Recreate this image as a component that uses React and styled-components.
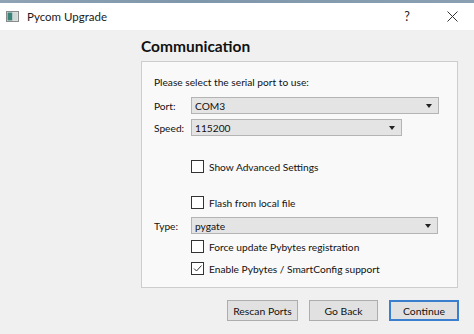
import React from "react";
import styled, { createGlobalStyle } from "styled-components";

const Global = createGlobalStyle`
  html, body { margin: 0; padding: 0; }
  body { font-family: "Lato", "Noto Sans", sans-serif; color: #111; }
`;

const Window = styled.div`
  width: 474px;
  height: 334px;
  display: flex;
  flex-direction: column;
  overflow: hidden;
  background: #f0f0f0;
`;

const DesktopStrip = styled.div`
  height: 3px;
  background: linear-gradient(90deg, #8ea3b4, #7f97ab 40%, #8aa0b2);
`;

const TitleBar = styled.div`
  height: 27px;
  background: #fff;
  display: flex;
  align-items: center;
  padding-left: 6px;
  font-size: 11.5px;
`;

const TitleText = styled.span`
  margin-left: 8px;
  color: #1a1a1a;
  flex: 1;
`;

const TitleBtn = styled.div`
  width: ${(p) => p.$w}px;
  display: flex;
  justify-content: center;
  align-items: center;
  font-size: 12.5px;
  color: #222;
`;

const Body = styled.div`
  flex: 1;
  display: flex;
  flex-direction: column;
  padding: 5px 16px 0 141px;
`;

const Heading = styled.div`
  font-size: 15.5px;
  font-weight: 700;
  height: 22px;
  line-height: 22px;
`;

const GroupBox = styled.div`
  margin-top: 4px;
  height: 225px;
  border: 1px solid #cdcdcd;
  background: #f9f9f9;
  padding-left: 12px;
  display: flex;
  flex-direction: column;
  font-size: 10.2px;
`;

const Row = styled.div`
  display: flex;
  align-items: center;
  height: 17px;
  margin-top: ${(p) => p.$mt}px;
  padding-left: ${(p) => (p.$indent ? 37 : 0)}px;
`;

const Label = styled.span`
  width: 37px;
`;

const Combo = styled.div`
  width: ${(p) => p.$w}px;
  height: 17px;
  box-sizing: border-box;
  border: 1px solid #b4b4b4;
  background: #e4e4e4;
  display: flex;
  align-items: center;
  padding-left: 3px;
`;

const ComboText = styled.span`
  flex: 1;
`;

const Arrow = styled.span`
  width: 0;
  height: 0;
  border-left: 3.5px solid transparent;
  border-right: 3.5px solid transparent;
  border-top: 4px solid #222;
  margin-right: 6px;
`;

const Box = styled.span`
  width: 13px;
  height: 13px;
  box-sizing: border-box;
  border: 1px solid #333;
  background: #fff;
  margin-right: 5px;
  display: flex;
  align-items: center;
  justify-content: center;
`;

const Buttons = styled.div`
  display: flex;
  justify-content: flex-end;
  gap: 11px;
  margin-top: 12px;
  margin-right: -1px;
`;

const Button = styled.div`
  width: ${(p) => p.$w}px;
  height: 21px;
  box-sizing: border-box;
  border: 1px solid ${(p) => (p.$primary ? "#3a7fcf" : "#adadad")};
  box-shadow: ${(p) => (p.$primary ? "inset 0 0 0 1px #3a7fcf" : "none")};
  background: #e1e1e1;
  display: flex;
  align-items: center;
  justify-content: center;
  font-size: 10.4px;
`;

const Check = ({ checked }) => (
  <Box>
    {checked && (
      <svg width="11" height="11" viewBox="0 0 11 11">
        <path d="M2 5.5 L4.5 8 L9.5 2.5" fill="none" stroke="#333" strokeWidth="1" />
      </svg>
    )}
  </Box>
);

const AppIcon = () => (
  <svg width="13" height="11" viewBox="0 0 13 11">
    <rect x="0.5" y="0.5" width="12" height="10" fill="#e8e8e8" stroke="#8a8a8a" />
    <rect x="1.5" y="1.5" width="5" height="8" fill="#3b8378" />
    <rect x="6.5" y="1.5" width="5" height="8" fill="#cfd8d6" />
  </svg>
);

export default function App() {
  return (
    <Window>
      <Global />
      <DesktopStrip />
      <TitleBar>
        <AppIcon />
        <TitleText>Pycom Upgrade</TitleText>
        <TitleBtn $w={46}>?</TitleBtn>
        <TitleBtn $w={44}>
          <svg width="11" height="11" viewBox="0 0 11 11">
            <path d="M0.5 0.5 L10.5 10.5 M10.5 0.5 L0.5 10.5" stroke="#333" strokeWidth="1" />
          </svg>
        </TitleBtn>
      </TitleBar>
      <Body>
        <Heading>Communication</Heading>
        <GroupBox>
          <Row $mt={11}>Please select the serial port to use:</Row>
          <Row $mt={7}>
            <Label>Port:</Label>
            <Combo $w={248}>
              <ComboText>COM3</ComboText>
              <Arrow />
            </Combo>
          </Row>
          <Row $mt={5}>
            <Label>Speed:</Label>
            <Combo $w={211}>
              <ComboText>115200</ComboText>
              <Arrow />
            </Combo>
          </Row>
          <Row $mt={22} $indent>
            <Check />
            Show Advanced Settings
          </Row>
          <Row $mt={19} $indent>
            <Check />
            Flash from local file
          </Row>
          <Row $mt={6}>
            <Label>Type:</Label>
            <Combo $w={247}>
              <ComboText>pygate</ComboText>
              <Arrow />
            </Combo>
          </Row>
          <Row $mt={4} $indent>
            <Check />
            Force update Pybytes registration
          </Row>
          <Row $mt={5} $indent>
            <Check checked />
            Enable Pybytes / SmartConfig support
          </Row>
        </GroupBox>
        <Buttons>
          <Button $w={71}>Rescan Ports</Button>
          <Button $w={69}>Go Back</Button>
          <Button $w={70} $primary>Continue</Button>
        </Buttons>
      </Body>
    </Window>
  );
}
